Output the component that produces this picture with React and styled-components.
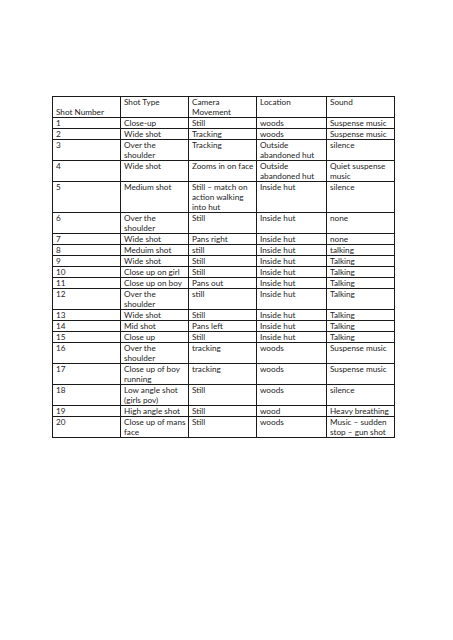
import React from 'react';
import styled, { createGlobalStyle } from 'styled-components';

const GlobalStyle = createGlobalStyle`
	html, body {
		margin: 0;
		padding: 0;
		background: #ffffff;
	}
`;

const Page = styled.div`
	width: 453px;
	height: 640px;
	padding: 96px 0 0 52px;
	box-sizing: border-box;
	background: #ffffff;
	font-family: 'Lato', 'Liberation Sans', sans-serif;
`;

const Table = styled.table`
	border-collapse: collapse;
	table-layout: fixed;
	width: 342px;
	color: #1e1e1e;
	font-size: 8.2px;
	line-height: 10px;
`;

const Cell = styled.td`
	border: 1px solid #1a1a1a;
	padding: 0 2px 0 3px;
	vertical-align: ${(p) => (p.bottom ? 'bottom' : 'top')};
	height: ${(p) => p.lines * 10 + (p.lines - 1) * 0}px;
	overflow: hidden;
	white-space: pre-line;
`;

const columns = [68, 68, 68, 70, 68];

const header = ['Shot Number', 'Shot Type', 'Camera\nMovement', 'Location', 'Sound'];

const rows = [
	[1, ['1', 'Close-up', 'Still', 'woods', 'Suspense music']],
	[1, ['2', 'Wide shot', 'Tracking', 'woods', 'Suspense music']],
	[2, ['3', 'Over the\nshoulder', 'Tracking', 'Outside\nabandoned hut', 'silence']],
	[2, ['4', 'Wide shot', 'Zooms in on face', 'Outside\nabandoned hut', 'Quiet suspense\nmusic']],
	[3, ['5', 'Medium shot', 'Still – match on\naction walking\ninto hut', 'Inside hut', 'silence']],
	[2, ['6', 'Over the\nshoulder', 'Still', 'Inside hut', 'none']],
	[1, ['7', 'Wide shot', 'Pans right', 'Inside hut', 'none']],
	[1, ['8', 'Meduim shot', 'still', 'Inside hut', 'talking']],
	[1, ['9', 'Wide shot', 'Still', 'Inside hut', 'Talking']],
	[1, ['10', 'Close up on girl', 'Still', 'Inside hut', 'Talking']],
	[1, ['11', 'Close up on boy', 'Pans out', 'Inside hut', 'Talking']],
	[2, ['12', 'Over the\nshoulder', 'still', 'Inside hut', 'Talking']],
	[1, ['13', 'Wide shot', 'Still', 'Inside hut', 'Talking']],
	[1, ['14', 'Mid shot', 'Pans left', 'Inside hut', 'Talking']],
	[1, ['15', 'Close up', 'Still', 'Inside hut', 'Talking']],
	[2, ['16', 'Over the\nshoulder', 'tracking', 'woods', 'Suspense music']],
	[2, ['17', 'Close up of boy\nrunning', 'tracking', 'woods', 'Suspense music']],
	[2, ['18', 'Low angle shot\n(girls pov)', 'Still', 'woods', 'silence']],
	[1, ['19', 'High angle shot', 'Still', 'wood', 'Heavy breathing']],
	[2, ['20', 'Close up of mans\nface', 'Still', 'woods', 'Music – sudden\nstop – gun shot']],
];

const App = () => {
	return (
		<Page>
			<GlobalStyle />
			<Table>
				<colgroup>
					{columns.map((w, i) => (
						<col key={i} style={{ width: w }} />
					))}
				</colgroup>
				<tbody>
					<tr>
						{header.map((h, i) => (
							<Cell key={i} lines={2} bottom={i === 0}>
								{h}
							</Cell>
						))}
					</tr>
					{rows.map(([lines, cells], r) => (
						<tr key={r}>
							{cells.map((c, i) => (
								<Cell key={i} lines={lines}>
									{c}
								</Cell>
							))}
						</tr>
					))}
				</tbody>
			</Table>
		</Page>
	);
};

export default App;
